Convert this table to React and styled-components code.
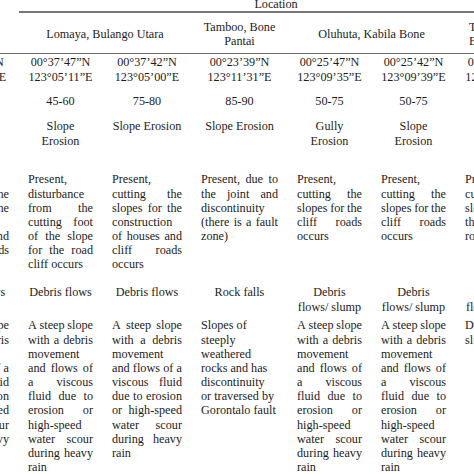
import React from 'react';
import styled, { createGlobalStyle } from 'styled-components';

const GlobalStyle = createGlobalStyle`
  html, body {
    margin: 0;
    padding: 0;
    background: #ffffff;
  }
`;

const Viewport = styled.div`
  width: 474px;
  height: 474px;
  overflow: hidden;
  background: #ffffff;
`;

const Table = styled.table`
  margin: -3px 0 0 -70.5px;
  width: 610px;
  table-layout: fixed;
  border-collapse: separate;
  border-spacing: 0;
  font-family: "Liberation Serif", "Times New Roman", serif;
  font-size: 12.2px;
  line-height: 14.17px;
  color: #1c1c1c;
`;

const Col = styled.col`
  width: ${p => p.$w}px;
`;

const TitleCell = styled.th`
  padding: 0 ${p => p.$shift || 9.5}px 0 9.5px;
  font-weight: normal;
  text-align: center;
  border-bottom: 2px solid #767676;
`;

const HeadRow = styled.tr`
  & > th {
    padding-top: 6.7px;
    padding-bottom: 5.1px;
    border-bottom: 1.5px solid #6e6e6e;
  }
`;

const HeadCell = styled.th`
  padding-left: ${p => p.$inset || 9.5}px;
  padding-right: 9.5px;
  font-weight: normal;
  vertical-align: middle;
`;

const BodyRow = styled.tr`
  line-height: ${p => p.$lh || 14.17}px;
  & > td {
    padding-top: ${p => p.$gap}px;
  }
`;

const Cell = styled.td`
  padding-left: 9.5px;
  padding-right: 9.5px;
  padding-bottom: 0;
  vertical-align: top;
`;

const Line = styled.span`
  display: ${p => (p.$spread ? 'flex' : 'block')};
  justify-content: space-between;
  white-space: nowrap;
  text-align: ${p => p.$align || 'left'};
`;

function Lines({ lines, align = 'center' }) {
  return lines.map((text, i) => {
    const spread = align === 'justify' && i < lines.length - 1 && text.includes(' ');
    if (spread) {
      return (
        <Line key={i} $spread>
          {text.split(' ').map((w, j) => <span key={j}>{w}</span>)}
        </Line>
      );
    }
    return (
      <Line key={i} $align={align === 'justify' ? 'left' : align}>
        {text}
      </Line>
    );
  });
}

const causeHouses = ['Present,', 'cutting the', 'slopes for the', 'construction', 'of houses and', 'cliff roads', 'occurs'];
const causeRoads = ['Present,', 'cutting the', 'slopes for the', 'cliff roads', 'occurs'];
const descNarrow = ['A steep slope', 'with a debris', 'movement', 'and flows of', 'a viscous', 'fluid due to', 'erosion or', 'high-speed', 'water scour', 'during heavy', 'rain'];
const descWide = ['A steep slope', 'with a debris', 'movement', 'and flows of a', 'viscous fluid', 'due to erosion', 'or high-speed', 'water scour', 'during heavy', 'rain'];

const columns = [
  { w: 89, coords: ['00°32’10”N', '123°06’55”E'], slope: '60-70', erosion: ['Slope', 'Erosion'], cause: causeHouses, movement: ['Debris flows'], desc: descWide },
  { w: 84, coords: ['00°37’47”N', '123°05’11”E'], slope: '45-60', erosion: ['Slope', 'Erosion'], cause: ['Present,', 'disturbance', 'from the', 'cutting foot', 'of the slope', 'for the road', 'cliff occurs'], movement: ['Debris flows'], desc: descNarrow },
  { w: 89, coords: ['00°37’42”N', '123°05’00”E'], slope: '75-80', erosion: ['Slope Erosion'], cause: causeHouses, movement: ['Debris flows'], desc: descWide },
  { w: 96, coords: ['00°23’39”N', '123°11’31”E'], slope: '85-90', erosion: ['Slope Erosion'], cause: ['Present, due to', 'the joint and', 'discontinuity', '(there is a fault', 'zone)'], movement: ['Rock falls'], desc: ['Slopes of', 'steeply', 'weathered', 'rocks and has', 'discontinuity', 'or traversed by', 'Gorontalo fault'], descAlign: 'left' },
  { w: 84, coords: ['00°25’47”N', '123°09’35”E'], slope: '50-75', erosion: ['Gully', 'Erosion'], cause: causeRoads, movement: ['Debris', 'flows/ slump'], desc: descNarrow },
  { w: 84, coords: ['00°25’42”N', '123°09’39”E'], slope: '50-75', erosion: ['Slope', 'Erosion'], cause: causeRoads, movement: ['Debris', 'flows/ slump'], desc: descNarrow },
  { w: 84, coords: ['00°26’10”N', '123°08’20”E'], slope: '40-60', erosion: ['Slope', 'Erosion'], cause: ['Present,', 'cutting the', 'slopes for the', 'the cliff', 'roads occurs'], movement: ['Debris', 'flows/ slump'], desc: ['Debris flows', 'slumps'] },
];

const rows = [
  { key: 'coords', gap: 0.8, lh: 15, align: 'center' },
  { key: 'slope', gap: 9, align: 'center' },
  { key: 'erosion', gap: 11.1, align: 'center' },
  { key: 'cause', gap: 24.7, align: 'justify' },
  { key: 'movement', gap: 13.8, align: 'center' },
  { key: 'desc', gap: 4.7, align: 'justify' },
];

export default function App() {
  return (
    <Viewport>
      <GlobalStyle />
      <Table>
        <colgroup>
          {columns.map((c, i) => <Col key={i} $w={c.w} />)}
        </colgroup>
        <thead>
          <tr>
            <th />
            <TitleCell colSpan={6} $shift={15.5}>Location</TitleCell>
          </tr>
          <HeadRow>
            <HeadCell><Lines lines={['Tumbihe,', 'Kabila']} /></HeadCell>
            <HeadCell colSpan={2}><Lines lines={['Lomaya, Bulango Utara']} /></HeadCell>
            <HeadCell><Lines lines={['Tamboo, Bone', 'Pantai']} /></HeadCell>
            <HeadCell colSpan={2}><Lines lines={['Oluhuta, Kabila Bone']} /></HeadCell>
            <HeadCell $inset={13.5}><Lines lines={['Tuladenggi,', 'East Bone']} align="left" /></HeadCell>
          </HeadRow>
        </thead>
        <tbody>
          {rows.map(r => (
            <BodyRow key={r.key} $gap={r.gap} $lh={r.lh}>
              {columns.map((c, i) => {
                const value = c[r.key];
                const lines = Array.isArray(value) ? value : [value];
                const align = r.key === 'desc' && c.descAlign ? c.descAlign : r.align;
                return (
                  <Cell key={i}>
                    <Lines lines={lines} align={align} />
                  </Cell>
                );
              })}
            </BodyRow>
          ))}
        </tbody>
      </Table>
    </Viewport>
  );
}
